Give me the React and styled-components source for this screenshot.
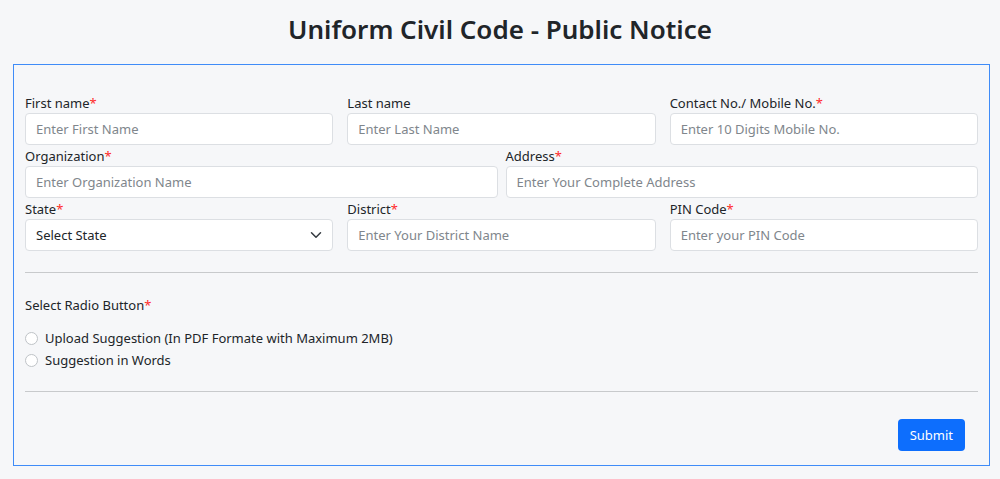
import React from "react";
import styled, { createGlobalStyle } from "styled-components";

const Global = createGlobalStyle`
  html, body { margin: 0; padding: 0; background: #f6f7f9; }
  body { font-family: "Noto Sans", "Open Sans", sans-serif; color: #212529; }
  * { box-sizing: border-box; }
`;

const Page = styled.div`
  width: 1000px;
  height: 479px;
  overflow: hidden;
  padding-top: 9px;
`;

const Title = styled.h1`
  margin: 0 0 15px;
  height: 40px;
  line-height: 40px;
  text-align: center;
  font-size: 26px;
  font-weight: 600;
  color: #212529;
`;

const Card = styled.form`
  margin-left: 13px;
  width: 977px;
  border: 1px solid #3f8cf8;
  padding: 27px 11px 14px 11px;
`;

const Grid = styled.div`
  display: grid;
  grid-template-columns: repeat(${(p) => p.$cols}, 1fr);
  column-gap: ${(p) => p.$gap}px;
`;

const Field = styled.div`
  display: flex;
  flex-direction: column;
`;

const Label = styled.label`
  font-size: 13px;
  line-height: 20px;
  height: 21px;
  padding-top: 1px;
  color: #212529;
`;

const Req = styled.span`
  color: #ff2b2b;
`;

const Input = styled.input`
  height: 32px;
  width: 100%;
  border: 1px solid #dcdfe3;
  border-radius: 4px;
  background: #fff;
  padding: 0 10px;
  font-family: inherit;
  font-size: 13px;
  color: #212529;
  outline: none;
  &::placeholder { color: #80868c; }
`;

const SelectBox = styled.div`
  height: 32px;
  border: 1px solid #dcdfe3;
  border-radius: 4px;
  background: #fff;
  padding: 0 10px;
  display: flex;
  align-items: center;
  justify-content: space-between;
  font-size: 13px;
  color: #212529;
`;

const Divider = styled.hr`
  border: 0;
  border-top: 1px solid #c8cacc;
  margin: ${(p) => p.$top}px 0 0;
`;

const SectionLabel = styled.div`
  margin-top: 22px;
  font-size: 13px;
  line-height: 20px;
`;

const RadioList = styled.div`
  margin-top: 12px;
  display: flex;
  flex-direction: column;
`;

const RadioRow = styled.label`
  display: flex;
  align-items: center;
  gap: 7px;
  height: 22px;
  font-size: 13px;
  color: #212529;
`;

const Circle = styled.span`
  width: 13px;
  height: 13px;
  border-radius: 50%;
  border: 1px solid #bfc3c7;
  background: #fff;
`;

const Footer = styled.div`
  display: flex;
  justify-content: flex-end;
  padding: 27px 13px 0 0;
`;

const Button = styled.button`
  height: 32px;
  padding: 0 12px;
  border: 0;
  border-radius: 4px;
  background: #0d6efd;
  color: #fff;
  font-family: inherit;
  font-size: 13px;
`;

const Chevron = () => (
  <svg width="12" height="12" viewBox="0 0 16 16" fill="none">
    <path d="M2 5l6 6 6-6" stroke="#343a40" strokeWidth="2" strokeLinecap="round" strokeLinejoin="round" />
  </svg>
);

const TextField = ({ label, req, placeholder }) => (
  <Field>
    <Label>
      {label}
      {req && <Req>*</Req>}
    </Label>
    <Input placeholder={placeholder} />
  </Field>
);

export default function App() {
  return (
    <Page>
      <Global />
      <Title>Uniform Civil Code - Public Notice</Title>
      <Card onSubmit={(e) => e.preventDefault()}>
        <Grid $cols={3} $gap={14}>
          <TextField label="First name" req placeholder="Enter First Name" />
          <TextField label="Last name" placeholder="Enter Last Name" />
          <TextField label="Contact No./ Mobile No." req placeholder="Enter 10 Digits Mobile No." />
        </Grid>
        <Grid $cols={2} $gap={8}>
          <TextField label="Organization" req placeholder="Enter Organization Name" />
          <TextField label="Address" req placeholder="Enter Your Complete Address" />
        </Grid>
        <Grid $cols={3} $gap={14}>
          <Field>
            <Label>
              State<Req>*</Req>
            </Label>
            <SelectBox>
              <span>Select State</span>
              <Chevron />
            </SelectBox>
          </Field>
          <TextField label="District" req placeholder="Enter Your District Name" />
          <TextField label="PIN Code" req placeholder="Enter your PIN Code" />
        </Grid>
        <Divider $top={21} />
        <SectionLabel>
          Select Radio Button<Req>*</Req>
        </SectionLabel>
        <RadioList>
          <RadioRow>
            <Circle />
            Upload Suggestion (In PDF Formate with Maximum 2MB)
          </RadioRow>
          <RadioRow>
            <Circle />
            Suggestion in Words
          </RadioRow>
        </RadioList>
        <Divider $top={20} />
        <Footer>
          <Button type="submit">Submit</Button>
        </Footer>
      </Card>
    </Page>
  );
}
